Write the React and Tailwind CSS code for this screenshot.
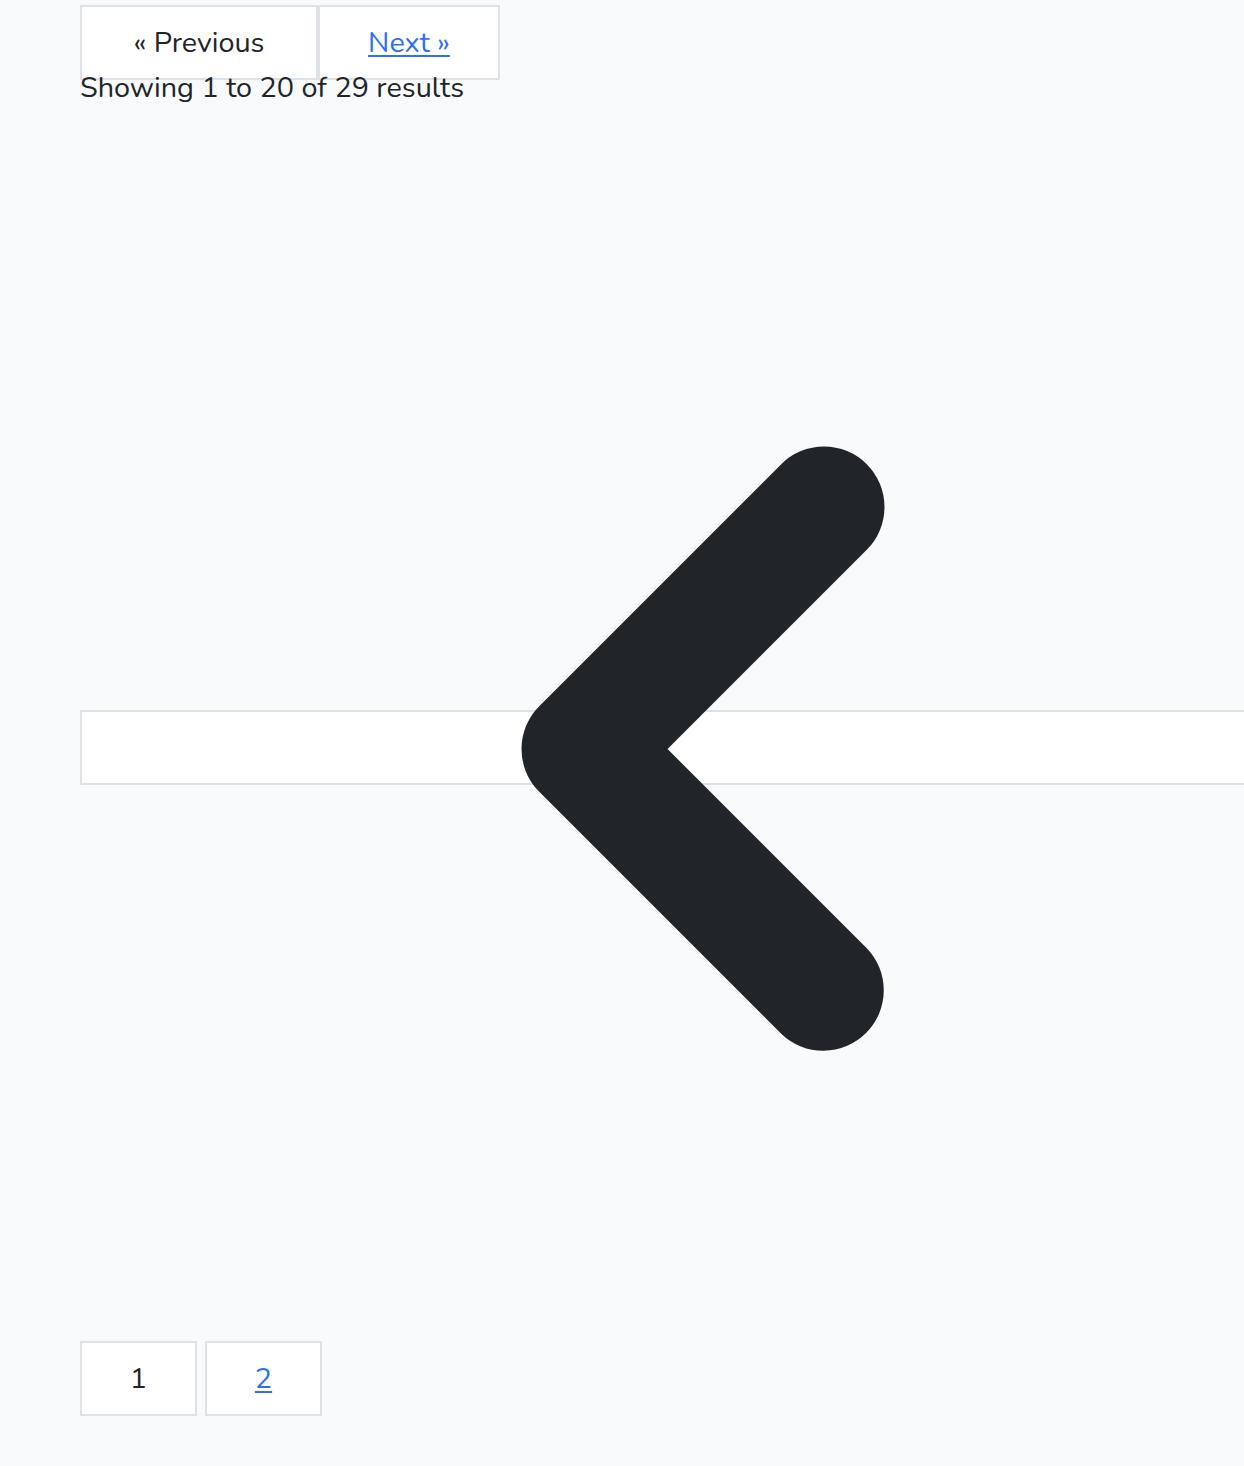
import React from 'react';

const PageBox = ({ children, className = '' }) => (
  <div className={`flex items-center justify-center bg-white border-2 border-[#dee2e6] h-[75px] ${className}`}>
    {children}
  </div>
);

const App = () => {
  return (
    <div className="min-h-[1466px] bg-[#f8fafc] overflow-hidden text-[#212529] text-[28.8px] leading-[28px] font-['Nunito','Open_Sans',sans-serif]">
      <div className="pl-[80px] pt-[5px]">
        {/* Simple prev / next */}
        <nav className="flex">
          <PageBox className="w-[238px]">
            <span>« Previous</span>
          </PageBox>
          <PageBox className="w-[182px]">
            <a href="#" className="text-[#2f6ff0] underline underline-offset-[3px]">Next »</a>
          </PageBox>
        </nav>

        <p className="mt-[-6px]">Showing 1 to 20 of 29 results</p>

        {/* Broken chevron row */}
        <div className="relative mt-[608px]">
          <div className="w-[1240px] h-[75px] bg-white border-2 border-[#dee2e6]"></div>
          <svg
            className="absolute left-[18px] top-[-566px] w-[1210px] h-[1210px]"
            viewBox="0 0 20 20"
            fill="#212529"
          >
            <path
              fillRule="evenodd"
              d="M12.707 5.293a1 1 0 010 1.414L9.414 10l3.293 3.293a1 1 0 01-1.414 1.414l-4-4a1 1 0 010-1.414l4-4a1 1 0 011.414 0z"
              clipRule="evenodd"
            />
          </svg>
        </div>

        {/* Page numbers */}
        <div className="flex gap-[8px] mt-[556px]">
          <PageBox className="w-[117px]">
            <span>1</span>
          </PageBox>
          <PageBox className="w-[117px]">
            <a href="#" className="text-[#2f6ff0] underline underline-offset-[3px]">2</a>
          </PageBox>
        </div>
      </div>
    </div>
  );
};

export default App;
